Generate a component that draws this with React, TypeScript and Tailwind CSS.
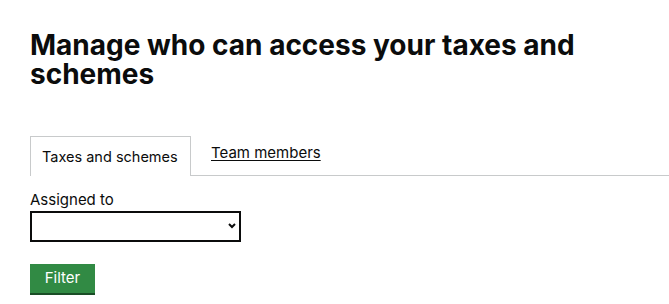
import React from 'react';

export default function App() {
  return (
    <div className="min-h-screen bg-white text-[#0b0c0c] pl-[30px] pt-[31px]" style={{ fontFamily: 'Inter, "Noto Sans", Arial, sans-serif' }}>
      <h1 className="text-[28px] leading-[29px] font-bold w-[600px]">
        Manage who can access your taxes and schemes
      </h1>

      {/* Tabs */}
      <div className="mt-[47px] flex items-end border-b border-[#c8cacb]">
        <div className="h-[40px] -mb-px px-[11px] flex items-center border border-b-0 border-[#c8cacb] bg-white text-[14.5px] w-[161px]">
          Taxes and schemes
        </div>
        <a href="#" className="ml-[20px] mb-[11px] text-[15px] underline underline-offset-2">
          Team members
        </a>
      </div>

      <label htmlFor="assigned" className="block mt-[14px] text-[15px] leading-[19px]">
        Assigned to
      </label>
      <div className="relative w-[211px] mt-[2px]">
        <select
          id="assigned"
          className="block w-full h-[31px] border-2 border-[#0b0c0c] bg-white appearance-none"
        >
          <option></option>
        </select>
        <svg className="absolute right-[5px] top-[12px] w-[8px] h-[6px]" viewBox="0 0 8 6" fill="none" stroke="#0b0c0c" strokeWidth={2}>
          <path d="M1 1l3 3 3-3" />
        </svg>
      </div>

      <button className="mt-[22px] w-[65px] h-[29px] bg-[#318a44] text-white text-[15px] shadow-[0_2px_0_#1a4d26]">
        Filter
      </button>
    </div>
  );
}
